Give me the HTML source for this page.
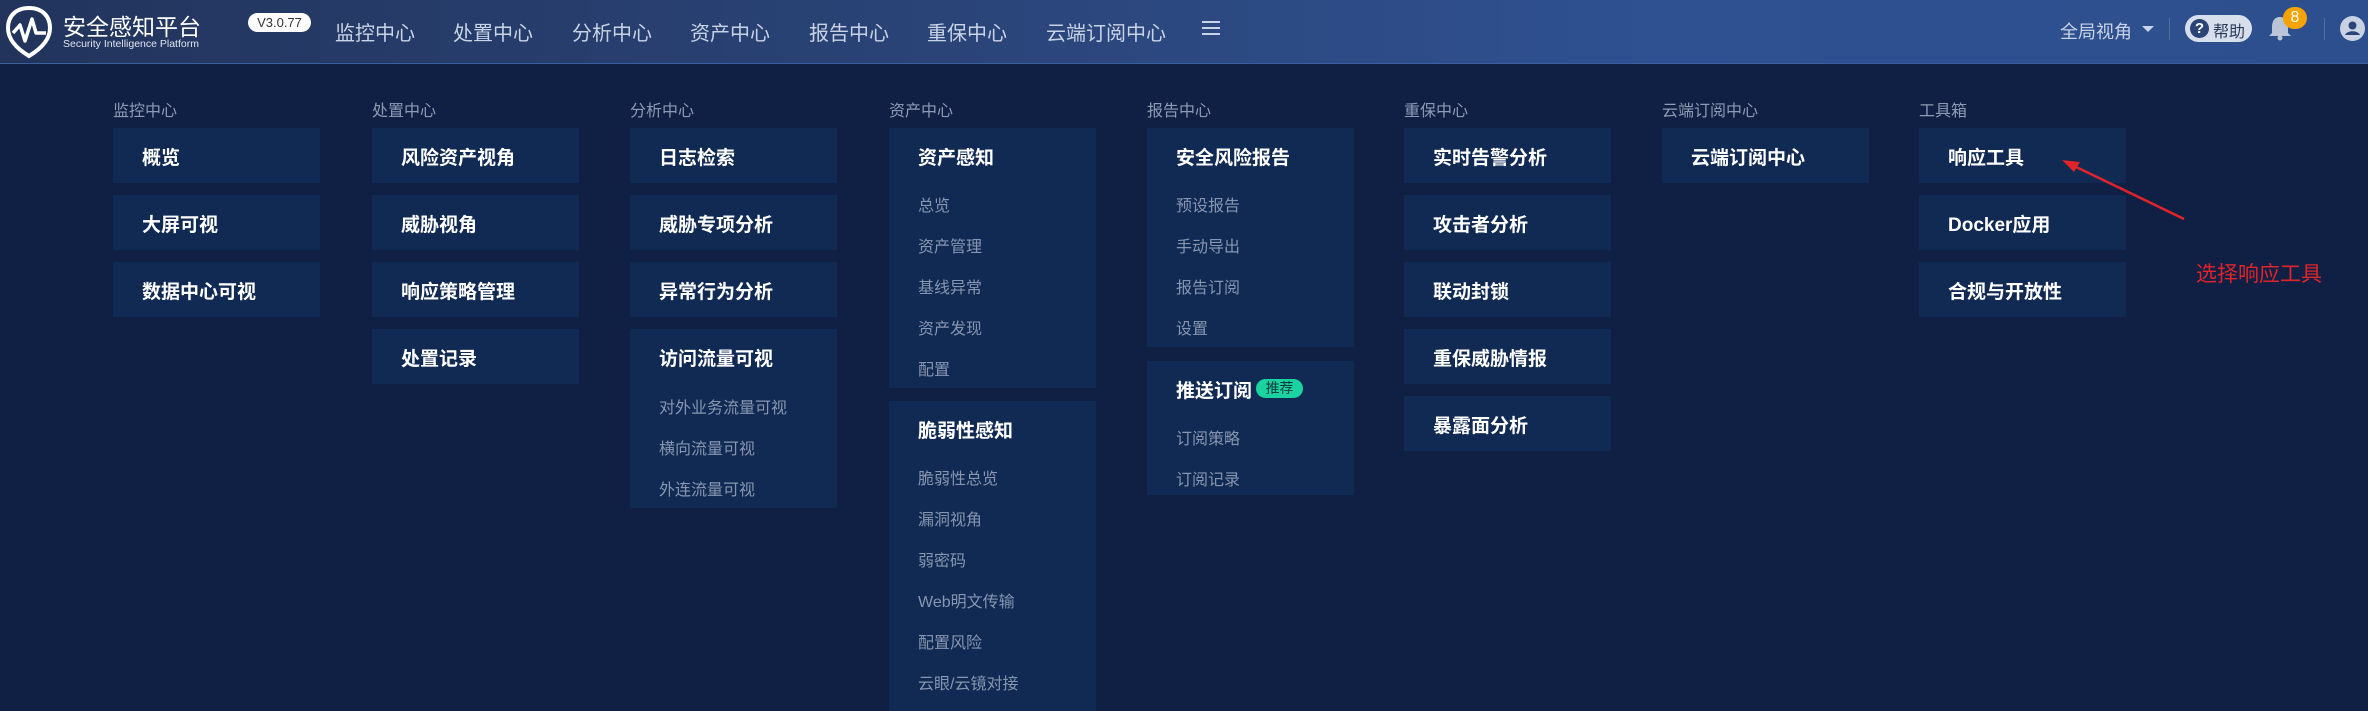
<!DOCTYPE html>
<html><head><meta charset="utf-8"><style>
*{margin:0;padding:0;box-sizing:border-box}
body{width:2368px;height:708px;overflow:hidden;background:#0f2044;font-family:"Liberation Sans","Noto Sans CJK SC",sans-serif;position:relative}
.hd{position:absolute;left:0;top:0;width:2368px;height:64px;background:linear-gradient(90deg,#22345c 0%,#2a4478 40%,#2f5191 70%,#2d4f8e 100%);border-bottom:1px solid #3a5ea0}
.a{position:absolute;white-space:nowrap}
.nav{color:#c9d3e6;font-size:20px;top:17px}
.lbl{color:#8e9bb4;font-size:16px;top:97px}
.box{position:absolute;background:#112a53;width:207px}
.t{position:absolute;left:29px;color:#fff;font-size:19px;font-weight:bold;white-space:nowrap}
.s{position:absolute;left:29px;color:#8795b0;font-size:16px;white-space:nowrap}
</style></head><body>
<div class="hd"></div>
<svg class="a" style="left:4px;top:5px" width="50" height="54" viewBox="0 0 50 54"><path d="M25 3 C12 3 4 11 4 23 C4 36 15 45 25 51 C35 45 46 36 46 23 C46 11 38 3 25 3Z" fill="none" stroke="#fff" stroke-width="4"/><path d="M9 28 L16 20 L21 36 L28 14 L32 28 L42 28" fill="none" stroke="#fff" stroke-width="3.5" stroke-linejoin="round"/></svg>
<div class="a" style="left:63px;top:8px;color:#fff;font-size:23px">安全感知平台</div>
<div class="a" style="left:63px;top:38px;color:#dfe5f0;font-size:10.5px">Security Intelligence Platform</div>
<div class="a" style="left:248px;top:13px;width:63px;height:19px;border-radius:10px;background:#fff;color:#333;font-size:13px;text-align:center;line-height:19px">V3.0.77</div>
<div class="a nav" style="left:335px">监控中心</div>
<div class="a nav" style="left:453px">处置中心</div>
<div class="a nav" style="left:572px">分析中心</div>
<div class="a nav" style="left:690px">资产中心</div>
<div class="a nav" style="left:809px">报告中心</div>
<div class="a nav" style="left:927px">重保中心</div>
<div class="a nav" style="left:1046px">云端订阅中心</div>
<div class="a" style="left:1202px;top:21px;width:18px;height:2px;background:#c9d3e6;box-shadow:0 6px 0 #c9d3e6,0 12px 0 #c9d3e6"></div>
<div class="a" style="left:2060px;top:18px;color:#c9d3e6;font-size:18px">全局视角</div>
<div class="a" style="left:2142px;top:26px;border:6px solid transparent;border-top:6px solid #c9d3e6"></div>
<div class="a" style="left:2169px;top:18px;width:1px;height:22px;background:#55709f"></div>
<div class="a" style="left:2185px;top:15px;width:67px;height:27px;border-radius:14px;background:#d8dfec"></div>
<div class="a" style="left:2190px;top:19px;width:19px;height:19px;border-radius:50%;background:#2a4478;color:#fff;font-size:15px;font-weight:bold;text-align:center;line-height:19px">?</div>
<div class="a" style="left:2213px;top:18px;color:#2a3a5a;font-size:16px">帮助</div>
<svg class="a" style="left:2268px;top:15px" width="24" height="26" viewBox="0 0 24 26"><path d="M12 2 C6 2 4 7 4 12 L4 18 L1 21 L23 21 L20 18 L20 12 C20 7 18 2 12 2Z" fill="#b9c4d8"/><circle cx="12" cy="23" r="2.5" fill="#b9c4d8"/></svg>
<div class="a" style="left:2283px;top:7px;width:24px;height:22px;border-radius:11px;background:#f5a300;color:#fff;font-size:16px;text-align:center;line-height:22px">8</div>
<div class="a" style="left:2324px;top:18px;width:1px;height:22px;background:#55709f"></div>
<svg class="a" style="left:2340px;top:16px" width="25" height="25" viewBox="0 0 25 25"><circle cx="12.5" cy="12.5" r="12.5" fill="#c9d2e2"/><circle cx="12.5" cy="9.5" r="4" fill="#2a4478"/><path d="M5 19 C7 14 18 14 20 19Z" fill="#2a4478"/></svg>

<div class="a lbl" style="left:113px">监控中心</div>
<div class="a lbl" style="left:372px">处置中心</div>
<div class="a lbl" style="left:630px">分析中心</div>
<div class="a lbl" style="left:889px">资产中心</div>
<div class="a lbl" style="left:1147px">报告中心</div>
<div class="a lbl" style="left:1404px">重保中心</div>
<div class="a lbl" style="left:1662px">云端订阅中心</div>
<div class="a lbl" style="left:1919px">工具箱</div>

<div class="box" style="left:113px;top:128px;height:55px"><div class="t" style="top:15px">概览</div></div>
<div class="box" style="left:113px;top:195px;height:55px"><div class="t" style="top:15px">大屏可视</div></div>
<div class="box" style="left:113px;top:262px;height:55px"><div class="t" style="top:15px">数据中心可视</div></div>

<div class="box" style="left:372px;top:128px;height:55px"><div class="t" style="top:15px">风险资产视角</div></div>
<div class="box" style="left:372px;top:195px;height:55px"><div class="t" style="top:15px">威胁视角</div></div>
<div class="box" style="left:372px;top:262px;height:55px"><div class="t" style="top:15px">响应策略管理</div></div>
<div class="box" style="left:372px;top:329px;height:55px"><div class="t" style="top:15px">处置记录</div></div>

<div class="box" style="left:630px;top:128px;height:55px"><div class="t" style="top:15px">日志检索</div></div>
<div class="box" style="left:630px;top:195px;height:55px"><div class="t" style="top:15px">威胁专项分析</div></div>
<div class="box" style="left:630px;top:262px;height:55px"><div class="t" style="top:15px">异常行为分析</div></div>
<div class="box" style="left:630px;top:329px;height:179px"><div class="t" style="top:15px">访问流量可视</div>
<div class="s" style="top:65px">对外业务流量可视</div><div class="s" style="top:106px">横向流量可视</div><div class="s" style="top:147px">外连流量可视</div></div>

<div class="box" style="left:889px;top:128px;height:260px"><div class="t" style="top:15px">资产感知</div>
<div class="s" style="top:64px">总览</div><div class="s" style="top:105px">资产管理</div><div class="s" style="top:146px">基线异常</div><div class="s" style="top:187px">资产发现</div><div class="s" style="top:228px">配置</div></div>
<div class="box" style="left:889px;top:401px;height:310px"><div class="t" style="top:15px">脆弱性感知</div>
<div class="s" style="top:64px">脆弱性总览</div><div class="s" style="top:105px">漏洞视角</div><div class="s" style="top:146px">弱密码</div><div class="s" style="top:187px">Web明文传输</div><div class="s" style="top:228px">配置风险</div><div class="s" style="top:269px">云眼/云镜对接</div></div>

<div class="box" style="left:1147px;top:128px;height:219px"><div class="t" style="top:15px">安全风险报告</div>
<div class="s" style="top:64px">预设报告</div><div class="s" style="top:105px">手动导出</div><div class="s" style="top:146px">报告订阅</div><div class="s" style="top:187px">设置</div></div>
<div class="box" style="left:1147px;top:361px;height:134px"><div class="t" style="top:15px">推送订阅</div>
<div class="a" style="left:109px;top:18px;width:47px;height:19px;border-radius:10px;background:#1ad3a0;color:#0e3a40;font-size:14px;text-align:center;line-height:19px">推荐</div>
<div class="s" style="top:64px">订阅策略</div><div class="s" style="top:105px">订阅记录</div></div>

<div class="box" style="left:1404px;top:128px;height:55px"><div class="t" style="top:15px">实时告警分析</div></div>
<div class="box" style="left:1404px;top:195px;height:55px"><div class="t" style="top:15px">攻击者分析</div></div>
<div class="box" style="left:1404px;top:262px;height:55px"><div class="t" style="top:15px">联动封锁</div></div>
<div class="box" style="left:1404px;top:329px;height:55px"><div class="t" style="top:15px">重保威胁情报</div></div>
<div class="box" style="left:1404px;top:396px;height:55px"><div class="t" style="top:15px">暴露面分析</div></div>

<div class="box" style="left:1662px;top:128px;height:55px"><div class="t" style="top:15px">云端订阅中心</div></div>

<div class="box" style="left:1919px;top:128px;height:55px"><div class="t" style="top:15px">响应工具</div></div>
<div class="box" style="left:1919px;top:195px;height:55px"><div class="t" style="top:15px">Docker应用</div></div>
<div class="box" style="left:1919px;top:262px;height:55px"><div class="t" style="top:15px">合规与开放性</div></div>

<svg class="a" style="left:2050px;top:150px" width="150" height="80" viewBox="0 0 150 80"><line x1="134" y1="69" x2="20" y2="14" stroke="#e0242a" stroke-width="2.5"/><path d="M12 10 L30 12 L24 22Z" fill="#e0242a"/></svg>
<div class="a" style="left:2196px;top:258px;color:#e0242a;font-size:21px">选择响应工具</div>
</body></html>
